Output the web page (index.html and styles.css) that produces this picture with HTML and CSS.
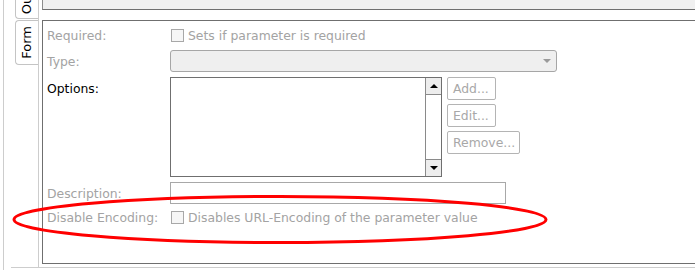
FILE: index.html
```html
<!DOCTYPE html>
<html>
<head>
<meta charset="utf-8">
<link rel="stylesheet" href="styles.css">
</head>
<body>
<div class="root">
  <div class="edge"></div>
  <div class="pane">
    <div class="tabs">
      <div class="tab tab-first"><span class="tab-label">Output</span></div>
      <div class="tab tab-form"><span class="tab-label">Form</span></div>
    </div>
    <div class="content">
      <div class="topbox"></div>
      <div class="panel">
        <div class="row row-required">
          <div class="label disabled">Required:</div>
          <div class="check-line">
            <span class="checkbox"></span>
            <span class="disabled">Sets if parameter is required</span>
          </div>
        </div>
        <div class="row row-type">
          <div class="label disabled">Type:</div>
          <div class="combo"><span class="combo-arrow"></span></div>
        </div>
        <div class="row row-options">
          <div class="label label-top">Options:</div>
          <div class="list">
            <div class="list-body"></div>
            <div class="scrollbar">
              <div class="sb-btn"><span class="tri-up"></span></div>
              <div class="sb-track"></div>
              <div class="sb-btn"><span class="tri-down"></span></div>
            </div>
          </div>
          <div class="buttons">
            <div class="btn btn-short">Add...</div>
            <div class="btn btn-short">Edit...</div>
            <div class="btn btn-long">Remove...</div>
          </div>
        </div>
        <div class="row row-desc">
          <div class="label disabled">Description:</div>
          <div class="textfield"></div>
        </div>
        <div class="row row-enc">
          <div class="label disabled">Disable Encoding:</div>
          <div class="check-line">
            <span class="checkbox"></span>
            <span class="disabled">Disables URL-Encoding of the parameter value</span>
          </div>
        </div>
      </div>
    </div>
  </div>
  <svg class="mark" width="695" height="272" viewBox="0 0 695 272">
    <ellipse cx="280" cy="219.5" rx="266" ry="23" fill="none" stroke="#ff0000" stroke-width="3"/>
  </svg>
</div>
</body>
</html>
```

FILE: styles.css
```css
html, body {
  margin: 0;
  padding: 0;
  background: #ffffff;
}
body {
  width: 695px;
  height: 272px;
  overflow: hidden;
  font-family: "DejaVu Sans", sans-serif;
  font-size: 12.4px;
  color: #000000;
}
.root {
  position: relative;
  width: 695px;
  height: 272px;
  display: flex;
  overflow: hidden;
}
.edge {
  width: 3px;
  height: 270px;
  border-right: 1px solid #cdcdcd;
  flex: none;
}
.pane {
  margin-left: 7px;
  width: 684px;
  height: 267px;
  border-bottom: 1px solid #cdcdcd;
  display: flex;
  flex: none;
}
.tabs {
  width: 27px;
  flex: none;
  display: flex;
  flex-direction: column;
  align-items: flex-end;
}
.tab {
  width: 22px;
  border: 1px solid #c4c4c4;
  border-right: none;
  border-radius: 4px 0 0 4px;
  background: #ffffff;
  display: flex;
  justify-content: center;
}
.tab-first {
  height: 60px;
  margin-top: -43px;
  align-items: flex-end;
  overflow: hidden;
}
.tab-first .tab-label {
  margin-bottom: 4px;
  white-space: nowrap;
}
.tab-form {
  height: 43px;
  margin-top: 1px;
  align-items: center;
}
.tab-label {
  writing-mode: vertical-rl;
  transform: rotate(180deg);
  line-height: 22px;
  font-size: 13px;
}
.content {
  width: 660px;
  flex: none;
  border-left: 1px solid #cdcdcd;
  padding-left: 3px;
  display: flex;
  flex-direction: column;
}
.topbox {
  height: 9px;
  background: #f0f0f0;
  border-left: 1px solid #8c8c8c;
  border-bottom: 1px solid #6f6f6f;
  width: 700px;
  flex: none;
}
.panel {
  margin-top: 10px;
  height: 242px;
  width: 700px;
  border: 1px solid #6f6f6f;
  border-right: none;
  padding-left: 4px;
  display: flex;
  flex-direction: column;
  flex: none;
}
.row {
  display: flex;
  align-items: center;
  flex: none;
}
.label {
  width: 123px;
  flex: none;
  line-height: 15px;
}
.disabled {
  color: #a3a3a3;
}
.row-required {
  margin-top: 7px;
  height: 15px;
}
.row-type {
  margin-top: 7px;
  height: 22px;
}
.row-options {
  margin-top: 5px;
  height: 100px;
  align-items: flex-start;
}
.row-desc {
  margin-top: 5px;
  height: 22px;
}
.row-enc {
  margin-top: 6px;
  height: 15px;
}
.label-top {
  margin-top: 4px;
}
.check-line {
  display: flex;
  align-items: center;
  gap: 4px;
  white-space: nowrap;
}
.checkbox {
  width: 11px;
  height: 11px;
  border: 1px solid #a8a8a8;
  background: #f6f6f6;
  margin-left: 1px;
  flex: none;
}
.combo {
  position: relative;
  width: 385px;
  height: 20px;
  border: 1px solid #a6a6a6;
  border-radius: 3px;
  background: #efefef;
}
.combo-arrow {
  position: absolute;
  right: 5px;
  top: 8px;
  width: 0;
  height: 0;
  border-left: 4px solid transparent;
  border-right: 4px solid transparent;
  border-top: 4px solid #9a9a9a;
}
.list {
  width: 270px;
  height: 98px;
  border: 1px solid #6f6f6f;
  display: flex;
  flex: none;
  background: #ffffff;
}
.list-body {
  flex: 1;
}
.scrollbar {
  width: 15px;
  border-left: 1px solid #8a8a8a;
  display: flex;
  flex-direction: column;
}
.sb-btn {
  height: 16px;
  background: #ededed;
  display: flex;
  align-items: center;
  justify-content: center;
  flex: none;
}
.sb-track {
  flex: 1;
  border-top: 1px solid #8a8a8a;
  border-bottom: 1px solid #8a8a8a;
  background: #ffffff;
}
.tri-up {
  width: 0;
  height: 0;
  border-left: 4px solid transparent;
  border-right: 4px solid transparent;
  border-bottom: 4px solid #000000;
}
.tri-down {
  width: 0;
  height: 0;
  border-left: 4px solid transparent;
  border-right: 4px solid transparent;
  border-top: 4px solid #000000;
}
.buttons {
  margin-left: 5px;
  display: flex;
  flex-direction: column;
  gap: 4px;
}
.btn {
  height: 21px;
  border: 1px solid #b4b4b4;
  border-radius: 2px;
  background: #ffffff;
  color: #a8a8a8;
  line-height: 21px;
  padding-left: 5px;
  box-sizing: content-box;
}
.btn-short {
  width: 42px;
}
.btn-long {
  width: 66px;
}
.textfield {
  width: 334px;
  height: 20px;
  border: 1px solid #a8a8a8;
  background: #ffffff;
}
.mark {
  position: absolute;
  left: 0;
  top: 0;
  pointer-events: none;
}
```
